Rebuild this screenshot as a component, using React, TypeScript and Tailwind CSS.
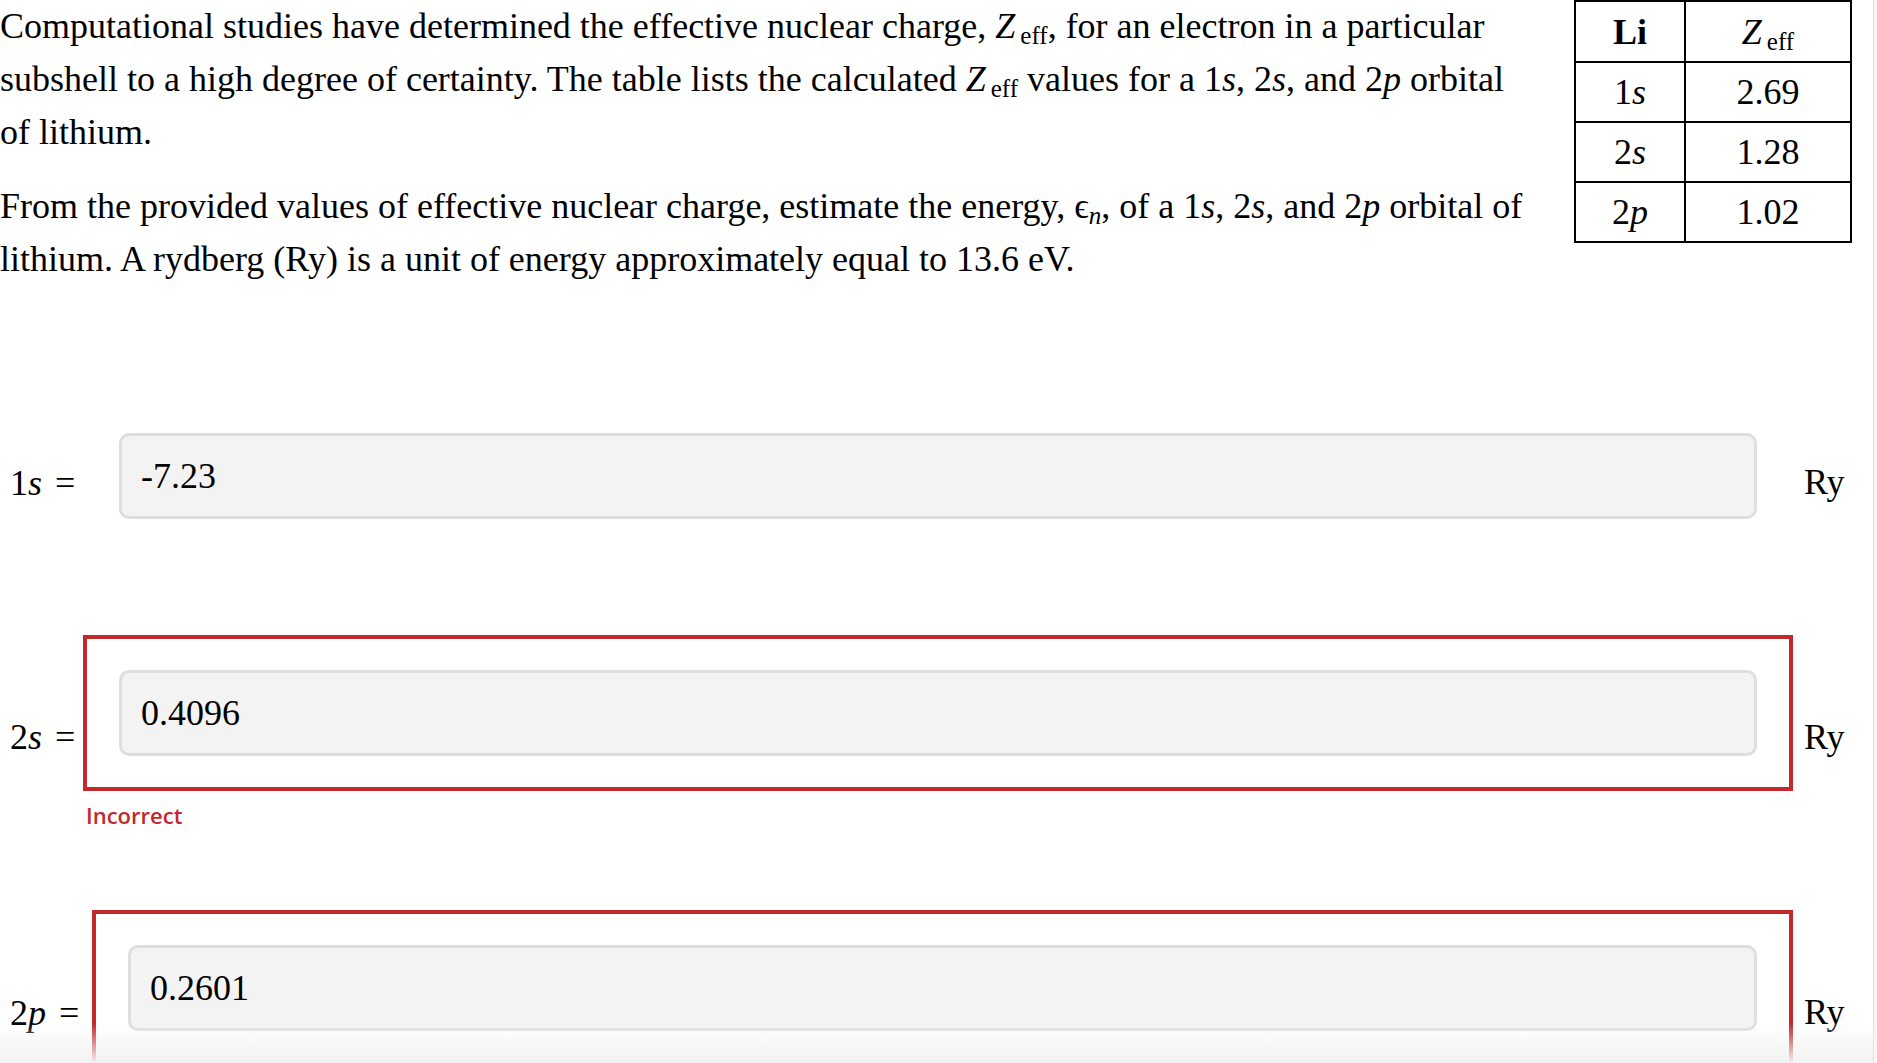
import React from "react";

const Zeff = () => (
  <span className="whitespace-nowrap">
    <i>Z</i>
    <span className="relative top-[6px] ml-[5px] text-[25px] leading-none">eff</span>
  </span>
);

type RowProps = {
  label: React.ReactNode;
  value: string;
  wrong: boolean;
  labelW: string;
  labelMt: string;
  ryMt: string;
};

const Row = ({ label, value, wrong, labelW, labelMt, ryMt }: RowProps) => (
  <div className="flex w-[1850px] items-start pl-[10px]">
    <div className={`shrink-0 whitespace-nowrap leading-[36px] ${labelW} ${labelMt}`}>{label}</div>
    <div
      className={`flex-1 border-4 px-[32px] py-[31px] ${wrong ? "border-[#c2282c]" : "border-transparent"}`}
    >
      <input
        readOnly
        value={value}
        className="block h-[86px] w-full rounded-[10px] border-[3px] border-[#dedede] bg-[#f3f3f3] pl-[19px] font-['Liberation_Serif',serif] text-[36px] text-black outline-none"
      />
    </div>
    <div className={`ml-[11px] w-[46px] shrink-0 leading-[36px] ${ryMt}`}>Ry</div>
  </div>
);

export default function App() {
  return (
    <div className="relative h-[1063px] w-[1877px] overflow-hidden bg-white font-['Liberation_Serif',serif] text-[36px] text-black">
      <div className="w-[1852px]">
        <div className="flex items-start justify-between">
          <div className="w-[1560px] whitespace-nowrap leading-[53px]">
            <p>
              Computational studies have determined the effective nuclear charge, <Zeff />, for an electron in a particular
              <br />
              subshell to a high degree of certainty. The table lists the calculated <Zeff /> values for a 1<i>s</i>, 2
              <i>s</i>, and 2<i>p</i> orbital
              <br />
              of lithium.
            </p>
            <p className="mt-[21px]">
              From the provided values of effective nuclear charge, estimate the energy, ϵ
              <i className="relative top-[6px] text-[25px] leading-none">n</i>, of a 1<i>s</i>, 2<i>s</i>, and 2<i>p</i>{" "}
              orbital of
              <br />
              lithium. A rydberg (Ry) is a unit of energy approximately equal to 13.6 eV.
            </p>
          </div>
          <table className="w-[276px] table-fixed border-collapse border-2 border-black text-center">
            <colgroup>
              <col className="w-[110px]" />
              <col className="w-[166px]" />
            </colgroup>
            <tbody>
              <tr className="h-[61px]">
                <td className="border-2 border-black font-bold">Li</td>
                <td className="border-2 border-black">
                  <Zeff />
                </td>
              </tr>
              <tr className="h-[60px]">
                <td className="border-2 border-black">
                  1<i>s</i>
                </td>
                <td className="border-2 border-black">2.69</td>
              </tr>
              <tr className="h-[60px]">
                <td className="border-2 border-black">
                  2<i>s</i>
                </td>
                <td className="border-2 border-black">1.28</td>
              </tr>
              <tr className="h-[60px]">
                <td className="border-2 border-black">
                  2<i>p</i>
                </td>
                <td className="border-2 border-black">1.02</td>
              </tr>
            </tbody>
          </table>
        </div>

        <div className="mt-[112px]">
          <Row
            label={
              <>
                1<i>s</i>
                <span className="ml-[13px]">=</span>
              </>
            }
            value="-7.23"
            wrong={false}
            labelW="w-[73px]"
            labelMt="mt-[67px]"
            ryMt="mt-[66px]"
          />
          <div className="mt-[81px]">
            <Row
              label={
                <>
                  2<i>s</i>
                  <span className="ml-[13px]">=</span>
                </>
              }
              value="0.4096"
              wrong={true}
              labelW="w-[73px]"
              labelMt="mt-[84px]"
              ryMt="mt-[84px]"
            />
          </div>
          <div className="mt-[9px] pl-[86px] font-['Open_Sans',sans-serif] text-[22px] font-semibold leading-[30px] text-[#c2282c]">
            Incorrect
          </div>
          <div className="mt-[80px]">
            <Row
              label={
                <>
                  2<i>p</i>
                  <span className="ml-[13px]">=</span>
                </>
              }
              value="0.2601"
              wrong={true}
              labelW="w-[82px]"
              labelMt="mt-[85px]"
              ryMt="mt-[84px]"
            />
          </div>
        </div>
      </div>

      <div className="pointer-events-none absolute bottom-0 left-0 right-[4px] h-[40px] bg-linear-to-b from-white/0 to-[#f2f2f2]" />
      <div className="absolute right-0 top-0 h-full w-[4px] border-l border-[#e2e2e2] bg-[#f7f7f7]" />
    </div>
  );
}
